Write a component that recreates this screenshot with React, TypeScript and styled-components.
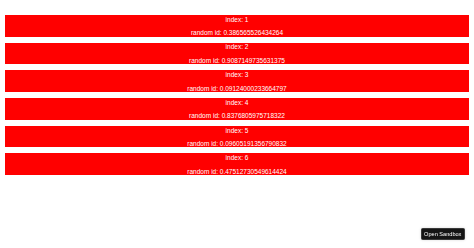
import React from "react";
import styled, { createGlobalStyle } from "styled-components";

const Global = createGlobalStyle`
  html, body { margin: 0; padding: 0; background: #ffffff; }
  body { font-family: "Liberation Sans", Arial, Helvetica, sans-serif; }
`;

const List = styled.div`
  display: flex;
  flex-direction: column;
  gap: 6px;
  padding: 15px 5px 0 5px;
`;

const Item = styled.div`
  height: 21.7px;
  box-sizing: border-box;
  background: #ff0000;
  color: #ffffff;
  display: flex;
  flex-direction: column;
  align-items: center;
  padding-top: 0.8px;
  gap: 6.2px;
  font-size: 6.5px;
  line-height: 7.4px;
`;

const Line = styled.div`
  white-space: nowrap;
`;

const SandboxButton = styled.button`
  position: fixed;
  right: 9.5px;
  bottom: 8.5px;
  width: 43.5px;
  height: 11.8px;
  padding: 0;
  border: 0.5px solid #3a3a3a;
  border-radius: 1.5px;
  background: #151515;
  color: #ffffff;
  font-family: "Liberation Sans", Arial, sans-serif;
  font-size: 5.6px;
  line-height: 11px;
  box-shadow: 0 0 3px rgba(0, 0, 0, 0.15);
  cursor: pointer;
`;

const items = [
  "0.386565526434264",
  "0.9087149735631375",
  "0.09124000233664797",
  "0.8376805975718322",
  "0.09605191356790832",
  "0.47512730549614424",
];

export default function App() {
  return (
    <>
      <Global />
      <List>
        {items.map((id, i) => (
          <Item key={i}>
            <Line>index: {i + 1}</Line>
            <Line>random id: {id}</Line>
          </Item>
        ))}
      </List>
      <SandboxButton>Open Sandbox</SandboxButton>
    </>
  );
}
